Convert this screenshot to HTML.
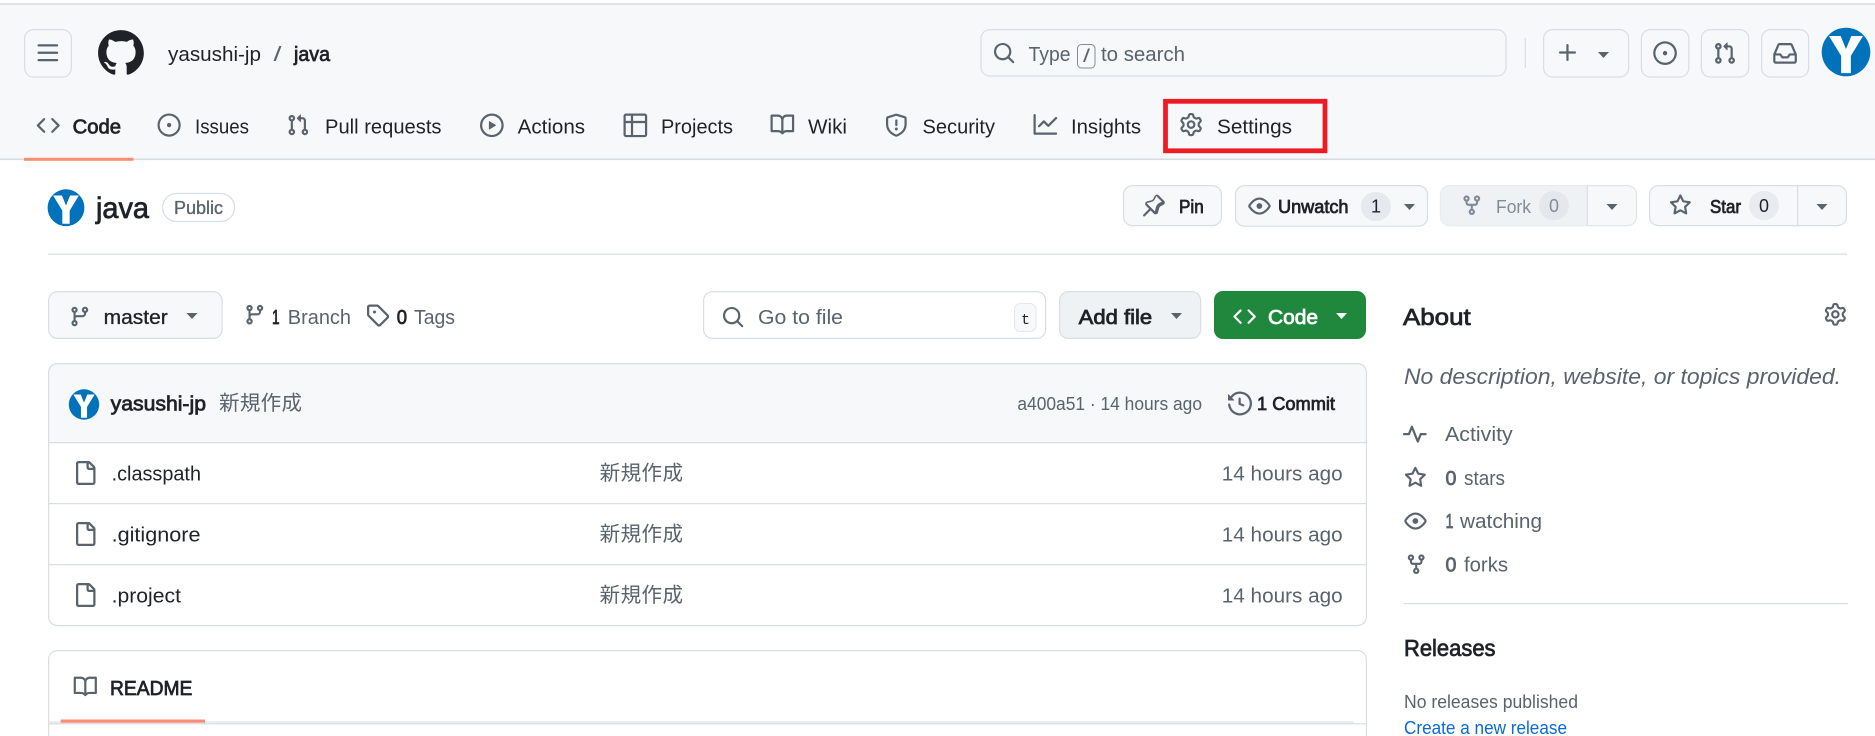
<!DOCTYPE html>
<html lang="ja"><head><meta charset="utf-8"><title>yasushi-jp/java</title>
<style>
html,body{margin:0;padding:0;background:#fff;width:1875px;height:736px;overflow:hidden}
svg{display:block}
text{font-family:"Liberation Sans","Noto Sans CJK JP",sans-serif;font-size:20px;fill:#1f2328}
.m{fill:#59636e}.b{stroke:#1f2328;stroke-width:.75px}.m.b{stroke:#59636e}.s{font-size:18px}
.i{fill:#59636e}
.cjk{font-family:"Liberation Sans","Noto Sans CJK JP",sans-serif;fill:#59636e;font-size:20.5px}
.bx{fill:none;stroke:#d8dee4;stroke-width:1.2}
.g{fill:#f6f8fa;stroke:#d8dee4;stroke-width:1.2}
</style></head><body>
<svg width="1875" height="736" viewBox="0 0 1875 736" xmlns="http://www.w3.org/2000/svg">
<defs>
<path id="bars" d="M1 2.75A.75.75 0 0 1 1.75 2h12.5a.75.75 0 0 1 0 1.5H1.75A.75.75 0 0 1 1 2.75Zm0 5A.75.75 0 0 1 1.75 7h12.5a.75.75 0 0 1 0 1.5H1.75A.75.75 0 0 1 1 7.75ZM1.75 12h12.5a.75.75 0 0 1 0 1.5H1.75a.75.75 0 0 1 0-1.5Z"/>
<path id="gh" d="M12 1C5.923 1 1 5.923 1 12c0 4.867 3.149 8.979 7.521 10.436.55.096.756-.233.756-.522 0-.262-.013-1.128-.013-2.049-2.764.509-3.479-.674-3.699-1.292-.124-.317-.66-1.293-1.127-1.554-.385-.207-.936-.715-.014-.729.866-.014 1.485.797 1.691 1.128.99 1.663 2.571 1.196 3.204.907.096-.715.385-1.196.701-1.471-2.448-.275-5.005-1.224-5.005-5.432 0-1.196.426-2.186 1.128-2.956-.111-.275-.496-1.402.11-2.915 0 0 .921-.288 3.024 1.128a10.193 10.193 0 0 1 2.75-.371c.936 0 1.871.123 2.75.371 2.104-1.43 3.025-1.128 3.025-1.128.605 1.513.221 2.64.111 2.915.701.77 1.127 1.747 1.127 2.956 0 4.222-2.571 5.157-5.019 5.432.399.344.743 1.004.743 2.035 0 1.471-.014 2.654-.014 3.025 0 .289.206.632.756.522C19.851 20.979 23 16.854 23 12c0-6.077-4.922-11-11-11Z"/>
<path id="code" d="m11.28 3.22 4.25 4.25a.75.75 0 0 1 0 1.06l-4.25 4.25a.749.749 0 0 1-1.275-.326.749.749 0 0 1 .215-.734L13.94 8l-3.72-3.72a.749.749 0 0 1 .326-1.275.749.749 0 0 1 .734.215Zm-6.56 0a.751.751 0 0 1 1.042.018.751.751 0 0 1 .018 1.042L2.06 8l3.72 3.72a.749.749 0 0 1-.326 1.275.749.749 0 0 1-.734-.215L.47 8.53a.75.75 0 0 1 0-1.06Z"/>
<path id="issue" d="M8 9.5a1.5 1.5 0 1 0 0-3 1.5 1.5 0 0 0 0 3ZM8 0a8 8 0 1 1 0 16A8 8 0 0 1 8 0ZM1.5 8a6.5 6.5 0 1 0 13 0 6.5 6.5 0 0 0-13 0Z"/>
<path id="pr" d="M1.5 3.25a2.25 2.25 0 1 1 3 2.122v5.256a2.251 2.251 0 1 1-1.5 0V5.372A2.25 2.25 0 0 1 1.5 3.25Zm5.677-.177L9.573.677A.25.25 0 0 1 10 .854V2.5h1A2.5 2.5 0 0 1 13.5 5v5.628a2.251 2.251 0 1 1-1.5 0V5a1 1 0 0 0-1-1h-1v1.646a.25.25 0 0 1-.427.177L7.177 3.427a.25.25 0 0 1 0-.354ZM3.75 2.5a.75.75 0 1 0 0 1.5.75.75 0 0 0 0-1.5Zm0 9.5a.75.75 0 1 0 0 1.5.75.75 0 0 0 0-1.5Zm8.25.75a.75.75 0 1 0 1.5 0 .75.75 0 0 0-1.5 0Z"/>
<path id="play" d="M8 0a8 8 0 1 1 0 16A8 8 0 0 1 8 0ZM1.5 8a6.5 6.5 0 1 0 13 0 6.5 6.5 0 0 0-13 0Zm4.879-2.773 4.264 2.559a.25.25 0 0 1 0 .428l-4.264 2.559A.25.25 0 0 1 6 10.559V5.442a.25.25 0 0 1 .379-.215Z"/>
<path id="table" d="M0 1.75C0 .784.784 0 1.75 0h12.5C15.216 0 16 .784 16 1.75v12.5A1.75 1.75 0 0 1 14.25 16H1.75A1.75 1.75 0 0 1 0 14.25ZM6.5 6.5v8h7.75a.25.25 0 0 0 .25-.25V6.5Zm8-1.5V1.75a.25.25 0 0 0-.25-.25H6.5V5Zm-13 1.5v7.75c0 .138.112.25.25.25H5v-8ZM5 5V1.5H1.75a.25.25 0 0 0-.25.25V5Z"/>
<path id="book" d="M0 1.75A.75.75 0 0 1 .75 1h4.253c1.227 0 2.317.59 3 1.501A3.743 3.743 0 0 1 11.006 1h4.245a.75.75 0 0 1 .75.75v10.5a.75.75 0 0 1-.75.75h-4.507a2.25 2.25 0 0 0-1.591.659l-.622.621a.75.75 0 0 1-1.06 0l-.622-.621A2.25 2.25 0 0 0 5.258 13H.75a.75.75 0 0 1-.75-.75Zm7.251 10.324.004-5.073-.002-2.253A2.25 2.25 0 0 0 5.003 2.5H1.5v9h3.757a3.75 3.75 0 0 1 1.994.574ZM8.755 4.75l-.004 7.322a3.752 3.752 0 0 1 1.992-.572H14.5v-9h-3.495a2.25 2.25 0 0 0-2.25 2.25Z"/>
<path id="shield" d="M7.467.133a1.748 1.748 0 0 1 1.066 0l5.25 1.68A1.75 1.75 0 0 1 15 3.48V7c0 1.566-.32 3.182-1.303 4.682-.983 1.498-2.585 2.813-5.032 3.855a1.697 1.697 0 0 1-1.33 0c-2.447-1.042-4.049-2.357-5.032-3.855C1.32 10.182 1 8.566 1 7V3.48a1.75 1.75 0 0 1 1.217-1.667Zm.61 1.429a.25.25 0 0 0-.153 0l-5.25 1.68a.25.25 0 0 0-.174.238V7c0 1.358.275 2.666 1.057 3.86.784 1.194 2.121 2.34 4.366 3.297a.196.196 0 0 0 .154 0c2.245-.956 3.582-2.104 4.366-3.298C13.225 9.666 13.5 8.36 13.5 7V3.48a.251.251 0 0 0-.174-.237l-5.25-1.68ZM8.75 4.75v3a.75.75 0 0 1-1.5 0v-3a.75.75 0 0 1 1.5 0ZM9 10.5a1 1 0 1 1-2 0 1 1 0 0 1 2 0Z"/>
<path id="graph" d="M1.5 1.75V13.5h13.75a.75.75 0 0 1 0 1.5H.75a.75.75 0 0 1-.75-.75V1.75a.75.75 0 0 1 1.5 0Zm14.28 2.53-5.25 5.25a.75.75 0 0 1-1.06 0L7 7.06 4.28 9.78a.751.751 0 0 1-1.042-.018.751.751 0 0 1-.018-1.042l3.25-3.25a.75.75 0 0 1 1.06 0L10 7.94l4.72-4.72a.751.751 0 0 1 1.042.018.751.751 0 0 1 .018 1.042Z"/>
<path id="gear" fill-rule="evenodd" d="M8 0a8.2 8.2 0 0 1 .701.031C9.444.095 9.99.645 10.16 1.29l.288 1.107c.018.066.079.158.212.224.231.114.454.243.668.386.123.082.233.09.299.071l1.103-.303c.644-.176 1.392.021 1.82.63.27.385.506.792.704 1.218.315.675.111 1.422-.364 1.891l-.814.806c-.049.048-.098.147-.088.294.016.257.016.515 0 .772-.01.147.038.246.088.294l.814.806c.475.469.679 1.216.364 1.891a7.977 7.977 0 0 1-.704 1.217c-.428.61-1.176.807-1.82.63l-1.102-.302c-.067-.019-.177-.011-.3.071a5.909 5.909 0 0 1-.668.386c-.133.066-.194.158-.211.224l-.29 1.106c-.168.646-.715 1.196-1.458 1.26a8.006 8.006 0 0 1-1.402 0c-.743-.064-1.289-.614-1.458-1.26l-.289-1.106c-.018-.066-.079-.158-.212-.224a5.738 5.738 0 0 1-.668-.386c-.123-.082-.233-.09-.299-.071l-1.103.303c-.644.176-1.392-.021-1.82-.63a8.12 8.12 0 0 1-.704-1.218c-.315-.675-.111-1.422.363-1.891l.815-.806c.05-.048.098-.147.088-.294a6.214 6.214 0 0 1 0-.772c.01-.147-.038-.246-.088-.294l-.815-.806C.635 6.045.431 5.298.746 4.623a7.92 7.92 0 0 1 .704-1.217c.428-.61 1.176-.807 1.82-.63l1.102.302c.067.019.177.011.3-.071.214-.143.437-.272.668-.386.133-.066.194-.158.211-.224l.29-1.106C6.009.645 6.556.095 7.299.03 7.53.01 7.764 0 8 0Zm-.571 1.525c-.036.003-.108.036-.137.146l-.289 1.105c-.147.561-.549.967-.998 1.189-.173.086-.34.183-.5.29-.417.278-.97.423-1.529.27l-1.103-.303c-.109-.03-.175.016-.195.045-.22.312-.412.644-.573.99-.014.031-.021.11.059.19l.815.806c.411.406.562.957.53 1.456a4.709 4.709 0 0 0 0 .582c.032.499-.119 1.05-.53 1.456l-.815.806c-.081.08-.073.159-.059.19.162.346.353.677.573.989.02.03.085.076.195.046l1.102-.303c.56-.153 1.113-.008 1.53.27.161.107.328.204.501.29.447.222.85.629.997 1.189l.289 1.105c.029.109.101.143.137.146a6.6 6.6 0 0 0 1.142 0c.036-.003.108-.036.137-.146l.289-1.105c.147-.561.549-.967.998-1.189.173-.086.34-.183.5-.29.417-.278.97-.423 1.529-.27l1.103.303c.109.029.175-.016.195-.045.22-.313.411-.644.573-.99.014-.031.021-.11-.059-.19l-.815-.806c-.411-.406-.562-.957-.53-1.456a4.709 4.709 0 0 0 0-.582c-.032-.499.119-1.05.53-1.456l.815-.806c.081-.08.073-.159.059-.19a6.464 6.464 0 0 0-.573-.989c-.02-.03-.085-.076-.195-.046l-1.102.303c-.56.153-1.113.008-1.53-.27a4.44 4.44 0 0 0-.501-.29c-.447-.222-.85-.629-.997-1.189l-.289-1.105c-.029-.11-.101-.143-.137-.146a6.6 6.6 0 0 0-1.142 0ZM11 8a3 3 0 1 1-6 0 3 3 0 0 1 6 0ZM9.5 8a1.5 1.5 0 1 0-3.001.001A1.5 1.5 0 0 0 9.5 8Z"/>
<path id="search" d="M10.68 11.74a6 6 0 0 1-7.922-8.982 6 6 0 0 1 8.982 7.922l3.04 3.04a.749.749 0 0 1-.326 1.275.749.749 0 0 1-.734-.215ZM11.5 7a4.499 4.499 0 1 0-8.997 0A4.499 4.499 0 0 0 11.5 7Z"/>
<path id="plus" d="M7.75 2a.75.75 0 0 1 .75.75V7h4.25a.75.75 0 0 1 0 1.5H8.5v4.25a.75.75 0 0 1-1.5 0V8.5H2.75a.75.75 0 0 1 0-1.5H7V2.75A.75.75 0 0 1 7.75 2Z"/>
<path id="inbox" d="M2.8 2.06A1.75 1.75 0 0 1 4.41 1h7.18c.7 0 1.333.417 1.61 1.06l2.74 6.395c.04.093.06.194.06.295v4.5A1.75 1.75 0 0 1 14.25 15H1.75A1.75 1.75 0 0 1 0 13.25v-4.5c0-.101.02-.202.06-.295Zm1.61.44a.25.25 0 0 0-.23.152L1.887 8H4.75a.75.75 0 0 1 .6.3L6.625 10h2.75l1.275-1.7a.75.75 0 0 1 .6-.3h2.863L11.82 2.652a.25.25 0 0 0-.23-.152Zm10.09 7h-2.875l-1.275 1.7a.75.75 0 0 1-.6.3h-3.5a.75.75 0 0 1-.6-.3L4.375 9.5H1.5v3.75c0 .138.112.25.25.25h12.5a.25.25 0 0 0 .25-.25Z"/>
<path id="pin" fill-rule="evenodd" d="m11.294.984 3.722 3.722a1.75 1.75 0 0 1-.504 2.826l-1.327.613a3.089 3.089 0 0 0-1.707 2.084l-.584 2.454c-.317 1.332-1.972 1.8-2.94.832L5.75 11.311 1.78 15.28a.749.749 0 0 1-1.275-.326.749.749 0 0 1 .215-.734L4.69 10.25 2.487 8.046c-.968-.968-.5-2.623.832-2.94l2.454-.584a3.08 3.08 0 0 0 2.084-1.707l.613-1.327a1.75 1.75 0 0 1 2.824-.504ZM9.53 1.782 8.917 3.11a4.58 4.58 0 0 1-3.1 2.51l-2.454.584a.25.25 0 0 0-.12.42l5.128 5.128a.25.25 0 0 0 .42-.12l.584-2.454a4.58 4.58 0 0 1 2.51-3.1l1.327-.613a.25.25 0 0 0 .072-.404l-3.722-3.722a.25.25 0 0 0-.403.072Z"/>
<path id="eye" d="M8 2c1.981 0 3.671.992 4.933 2.078 1.27 1.091 2.187 2.345 2.637 3.023a1.62 1.62 0 0 1 0 1.798c-.45.678-1.367 1.932-2.637 3.023C11.67 13.008 9.981 14 8 14c-1.981 0-3.671-.992-4.933-2.078C1.797 10.83.88 9.576.43 8.898a1.62 1.62 0 0 1 0-1.798c.45-.677 1.367-1.931 2.637-3.022C4.33 2.992 6.019 2 8 2ZM1.679 7.932a.12.12 0 0 0 0 .136c.411.622 1.241 1.75 2.366 2.717C5.176 11.758 6.527 12.5 8 12.5c1.473 0 2.825-.742 3.955-1.715 1.124-.967 1.954-2.096 2.366-2.717a.12.12 0 0 0 0-.136c-.412-.621-1.242-1.75-2.366-2.717C10.824 4.242 9.473 3.5 8 3.5c-1.473 0-2.825.742-3.955 1.715-1.124.967-1.954 2.096-2.366 2.717ZM8 10a2 2 0 1 1-.001-3.999A2 2 0 0 1 8 10Z"/>
<path id="fork" d="M5 5.372v.878c0 .414.336.75.75.75h4.5a.75.75 0 0 0 .75-.75v-.878a2.25 2.25 0 1 1 1.5 0v.878a2.25 2.25 0 0 1-2.25 2.25h-1.5v2.128a2.251 2.251 0 1 1-1.5 0V8.5h-1.5A2.25 2.25 0 0 1 3.5 6.25v-.878a2.25 2.25 0 1 1 1.5 0ZM5 3.25a.75.75 0 1 0-1.5 0 .75.75 0 0 0 1.5 0Zm6.75.75a.75.75 0 1 0 0-1.5.75.75 0 0 0 0 1.5Zm-3 8.75a.75.75 0 1 0-1.5 0 .75.75 0 0 0 1.5 0Z"/>
<path id="star" d="M8 .25a.75.75 0 0 1 .673.418l1.882 3.815 4.21.612a.75.75 0 0 1 .416 1.279l-3.046 2.97.719 4.192a.751.751 0 0 1-1.088.791L8 12.347l-3.766 1.98a.75.75 0 0 1-1.088-.79l.72-4.194L.818 6.374a.75.75 0 0 1 .416-1.28l4.21-.611L7.327.668A.75.75 0 0 1 8 .25Zm0 2.445L6.615 5.5a.75.75 0 0 1-.564.41l-3.097.45 2.24 2.184a.75.75 0 0 1 .216.664l-.528 3.084 2.769-1.456a.75.75 0 0 1 .698 0l2.77 1.456-.53-3.084a.75.75 0 0 1 .216-.664l2.24-2.183-3.096-.45a.75.75 0 0 1-.564-.41L8 2.694Z"/>
<path id="branch" d="M9.5 3.25a2.25 2.25 0 1 1 3 2.122V6A2.5 2.5 0 0 1 10 8.5H6a1 1 0 0 0-1 1v1.128a2.251 2.251 0 1 1-1.5 0V5.372a2.25 2.25 0 1 1 1.5 0v1.836A2.493 2.493 0 0 1 6 7h4a1 1 0 0 0 1-1v-.628A2.25 2.25 0 0 1 9.5 3.25Zm-6 0a.75.75 0 1 0 1.5 0 .75.75 0 0 0-1.5 0Zm8.25-.75a.75.75 0 1 0 0 1.5.75.75 0 0 0 0-1.5ZM4.25 12a.75.75 0 1 0 0 1.5.75.75 0 0 0 0-1.5Z"/>
<path id="tag" d="M1 7.775V2.75C1 1.784 1.784 1 2.75 1h5.025c.464 0 .91.184 1.238.513l6.25 6.25a1.75 1.75 0 0 1 0 2.474l-5.026 5.026a1.75 1.75 0 0 1-2.474 0l-6.25-6.25A1.752 1.752 0 0 1 1 7.775Zm1.5 0c0 .066.026.13.073.177l6.25 6.25a.25.25 0 0 0 .354 0l5.025-5.025a.25.25 0 0 0 0-.354l-6.25-6.25a.25.25 0 0 0-.177-.073H2.75a.25.25 0 0 0-.25.25ZM6 5a1 1 0 1 1 0 2 1 1 0 0 1 0-2Z"/>
<path id="hist" d="m.427 1.927 1.215 1.215a8.002 8.002 0 1 1-1.6 5.685.75.75 0 1 1 1.493-.154 6.5 6.5 0 1 0 1.18-4.458l1.358 1.358A.25.25 0 0 1 3.896 6H.25A.25.25 0 0 1 0 5.75V2.104a.25.25 0 0 1 .427-.177ZM7.75 4a.75.75 0 0 1 .75.75v2.992l2.028.812a.75.75 0 0 1-.557 1.392l-2.5-1A.751.751 0 0 1 7 8.25v-3.5A.75.75 0 0 1 7.75 4Z"/>
<path id="file" d="M2 1.75C2 .784 2.784 0 3.75 0h6.586c.464 0 .909.184 1.237.513l2.914 2.914c.329.328.513.773.513 1.237v9.586A1.75 1.75 0 0 1 13.25 16h-9.5A1.75 1.75 0 0 1 2 14.25Zm1.75-.25a.25.25 0 0 0-.25.25v12.5c0 .138.112.25.25.25h9.5a.25.25 0 0 0 .25-.25V6h-2.75A1.75 1.75 0 0 1 9 4.25V1.5Zm6.75.062V4.25c0 .138.112.25.25.25h2.688l-.011-.013-2.914-2.914-.013-.011Z"/>
<path id="pulse" d="M6 2c.306 0 .582.187.696.471L10 10.731l1.304-3.26A.751.751 0 0 1 12 7h3.25a.75.75 0 0 1 0 1.5h-2.742l-1.812 4.528a.751.751 0 0 1-1.392 0L6 4.77 4.696 8.03A.75.75 0 0 1 4 8.5H.75a.75.75 0 0 1 0-1.5h2.742l1.812-4.529A.751.751 0 0 1 6 2Z"/>
<g id="av"><circle r="1" fill="#0072bc"/><path fill="#fff" d="M-.7-.66H-.22L0-.12.22-.66H.7L.2.16V.87H-.2V.16Z"/></g>
<path id="car" d="M0 0H11L5.5 6Z"/>
</defs>
<rect width="1875" height="736" fill="#fff"/>
<rect y="3" width="1875" height="2" fill="#e2e2e2"/>
<rect y="5" width="1875" height="154" fill="#f6f8fa"/>
<rect y="158.5" width="1875" height="1.6" fill="#d6dbe1"/>
<rect x="24" y="157.8" width="109.5" height="3" fill="#fd8c73"/>

<!-- top bar -->
<rect class="bx" x="24.6" y="29.6" width="46.8" height="47.4" rx="9"/>
<use href="#bars" class="i" transform="translate(36 41.3) scale(1.48)"/>
<use href="#gh" fill="#1f2328" transform="translate(96 28) scale(2.08)"/>
<text x="168" y="61" textLength="93" lengthAdjust="spacingAndGlyphs">yasushi-jp</text>
<text x="273.5" y="61" class="m" textLength="8" lengthAdjust="spacingAndGlyphs">/</text>
<text x="294" y="61" class="b" textLength="36" lengthAdjust="spacingAndGlyphs">java</text>

<rect class="bx" x="981" y="29.6" width="525" height="46.4" rx="9"/>
<use href="#search" class="i" transform="translate(992.5 41.5) scale(1.45)"/>
<text x="1028.5" y="61" class="m" textLength="42" lengthAdjust="spacingAndGlyphs">Type</text>
<rect x="1077.5" y="44.5" width="17.5" height="23.5" rx="4" fill="none" stroke="#818b98" stroke-width="1"/>
<text x="1083" y="62" class="m s" textLength="7" lengthAdjust="spacingAndGlyphs">/</text>
<text x="1101" y="61" class="m" textLength="84" lengthAdjust="spacingAndGlyphs">to search</text>
<rect x="1524.7" y="38" width="1.2" height="30" fill="#d8dee4"/>

<rect class="bx" x="1543.6" y="29.6" width="85" height="47.4" rx="9"/>
<use href="#plus" class="i" transform="translate(1556 41) scale(1.48)"/>
<use href="#car" class="i" transform="translate(1598 52)"/>
<rect class="bx" x="1641.4" y="29.6" width="47.4" height="47.4" rx="9"/>
<use href="#issue" class="i" transform="translate(1653.2 41.3) scale(1.48)"/>
<rect class="bx" x="1701.4" y="29.6" width="47.4" height="47.4" rx="9"/>
<use href="#pr" class="i" transform="translate(1712.8 41.5) scale(1.48)"/>
<rect class="bx" x="1761.6" y="29.6" width="47" height="47.4" rx="9"/>
<use href="#inbox" class="i" transform="translate(1773.2 41.5) scale(1.48)"/>
<use href="#av" transform="translate(1846 52) scale(24.3)"/>

<!-- nav -->
<use href="#code" class="i" transform="translate(36.4 113.6) scale(1.48)"/>
<text x="72.6" y="133.3" class="b" textLength="48.5" lengthAdjust="spacingAndGlyphs">Code</text>
<use href="#issue" class="i" transform="translate(157.5 113.5) scale(1.45)"/>
<text x="195" y="133.3" textLength="54" lengthAdjust="spacingAndGlyphs">Issues</text>
<use href="#pr" class="i" transform="translate(286.4 113.5) scale(1.45)"/>
<text x="325" y="133.3" textLength="116.5" lengthAdjust="spacingAndGlyphs">Pull requests</text>
<use href="#play" class="i" transform="translate(480 113.5) scale(1.48)"/>
<text x="517.6" y="133.3" textLength="67.5" lengthAdjust="spacingAndGlyphs">Actions</text>
<use href="#table" class="i" transform="translate(623.5 113.5) scale(1.48)"/>
<text x="661" y="133.3" textLength="72" lengthAdjust="spacingAndGlyphs">Projects</text>
<use href="#book" class="i" transform="translate(770.5 113) scale(1.48)"/>
<text x="808" y="133.3" textLength="39" lengthAdjust="spacingAndGlyphs">Wiki</text>
<use href="#shield" class="i" transform="translate(884.5 113.5) scale(1.48)"/>
<text x="922.5" y="133.3" textLength="72.5" lengthAdjust="spacingAndGlyphs">Security</text>
<use href="#graph" class="i" transform="translate(1033.5 112.5) scale(1.48)"/>
<text x="1071" y="133.3" textLength="70" lengthAdjust="spacingAndGlyphs">Insights</text>
<use href="#gear" class="i" transform="translate(1179.5 113) scale(1.45)"/>
<text x="1217" y="133.3" textLength="75" lengthAdjust="spacingAndGlyphs">Settings</text>
<rect x="1165.5" y="101.3" width="159.5" height="49.5" fill="none" stroke="#ed1c24" stroke-width="4.8"/>

<!-- repo head -->
<use href="#av" transform="translate(66 207.7) scale(18.4)"/>
<text x="96" y="218" class="b" style="font-size:30px" textLength="53" lengthAdjust="spacingAndGlyphs">java</text>
<rect x="162.6" y="193.5" width="72" height="28" rx="14" fill="#fff" stroke="#d8dee4" stroke-width="1.2"/>
<text x="174" y="213.8" class="m s b" textLength="49" lengthAdjust="spacingAndGlyphs" style="stroke-width:.35px">Public</text>

<rect class="g" x="1123.5" y="185.6" width="98" height="40" rx="9"/>
<use href="#pin" class="i" transform="translate(1142.3 194) scale(1.45)"/>
<text x="1179" y="213" class="s b" textLength="24.7" lengthAdjust="spacingAndGlyphs">Pin</text>

<rect class="g" x="1235.5" y="185.6" width="192" height="40.6" rx="9"/>
<use href="#eye" class="i" transform="translate(1248 194.6) scale(1.43)"/>
<text x="1278" y="213" class="s b" textLength="70.5" lengthAdjust="spacingAndGlyphs">Unwatch</text>
<rect x="1360.8" y="192" width="30.2" height="29" rx="14.5" fill="#e6eaef"/>
<text x="1371" y="212.5" class="s" textLength="10" lengthAdjust="spacingAndGlyphs">1</text>
<use href="#car" class="i" transform="translate(1404 204)"/>

<rect x="1440.5" y="185.6" width="196" height="40" rx="9" fill="#f6f8fa" stroke="#e1e5ea" stroke-width="1.2"/>
<path d="M1587 185.6H1449.5a9 9 0 0 0-9 9v22a9 9 0 0 0 9 9H1587Z" fill="#eff2f5"/>
<rect x="1586.7" y="185.6" width="1.2" height="40" fill="#d8dee4"/>
<use href="#fork" fill="#818b98" transform="translate(1460.6 194) scale(1.4)"/>
<text x="1496" y="213" class="s" style="fill:#818b98" textLength="35" lengthAdjust="spacingAndGlyphs">Fork</text>
<rect x="1539" y="191" width="30" height="29" rx="14.5" fill="#e4e8ec"/>
<text x="1549" y="212" class="s" style="fill:#818b98" textLength="10" lengthAdjust="spacingAndGlyphs">0</text>
<use href="#car" class="i" transform="translate(1606.5 204)"/>

<rect class="g" x="1649.5" y="185.6" width="197" height="40" rx="9"/>
<rect x="1797" y="185.6" width="1.2" height="40" fill="#d8dee4"/>
<use href="#star" class="i" transform="translate(1669 194) scale(1.42)"/>
<text x="1710" y="213" class="s b" textLength="31" lengthAdjust="spacingAndGlyphs">Star</text>
<rect x="1749" y="191" width="30" height="29" rx="14.5" fill="#e8ebef"/>
<text x="1759" y="212" class="s" textLength="10" lengthAdjust="spacingAndGlyphs">0</text>
<use href="#car" class="i" transform="translate(1816.5 204)"/>
<rect x="48" y="253.6" width="1799" height="1.2" fill="#d8dee4"/>

<!-- toolbar -->
<rect class="g" x="48.6" y="291.6" width="173.5" height="46.8" rx="9"/>
<use href="#branch" class="i" transform="translate(68.6 305.3) scale(1.4)"/>
<text x="103.7" y="324" class="b" style="stroke-width:.35px" textLength="64" lengthAdjust="spacingAndGlyphs">master</text>
<use href="#car" class="i" transform="translate(186.5 313)"/>
<use href="#branch" class="i" transform="translate(243.6 303.5) scale(1.4)"/>
<text x="272" y="324" class="b" textLength="7.6" lengthAdjust="spacingAndGlyphs">1</text>
<text x="287.8" y="324" class="m" textLength="63.2" lengthAdjust="spacingAndGlyphs">Branch</text>
<use href="#tag" class="i" transform="translate(365.5 303) scale(1.5)"/>
<text x="396.7" y="324" class="b" textLength="10.3" lengthAdjust="spacingAndGlyphs">0</text>
<text x="414" y="324" class="m" textLength="41" lengthAdjust="spacingAndGlyphs">Tags</text>

<rect x="703.6" y="291.6" width="342" height="46.8" rx="9" fill="#fff" stroke="#d8dee4" stroke-width="1.2"/>
<use href="#search" class="i" transform="translate(721.5 305.5) scale(1.45)"/>
<text x="758" y="324" class="m" textLength="85" lengthAdjust="spacingAndGlyphs">Go to file</text>
<rect x="1014.5" y="303.5" width="21.5" height="28" rx="6" fill="#f6f8fa" stroke="#e5e9ed" stroke-width="1"/>
<text x="1021" y="324" style="font-family:'Liberation Mono',monospace;font-size:15px;fill:#1f2328">t</text>

<rect x="1059.6" y="291.6" width="141" height="46.8" rx="9" fill="#eff2f5" stroke="#d8dee4" stroke-width="1.2"/>
<text x="1078.7" y="324" class="b" textLength="73.5" lengthAdjust="spacingAndGlyphs">Add file</text>
<use href="#car" class="i" transform="translate(1171 313)"/>

<rect x="1214" y="291" width="152" height="48" rx="9" fill="#1f883d"/>
<use href="#code" fill="#fff" transform="translate(1233 305) scale(1.45)"/>
<text x="1268" y="324" class="b" style="fill:#fff;stroke:#fff" textLength="50" lengthAdjust="spacingAndGlyphs">Code</text>
<use href="#car" fill="#fff" transform="translate(1336 313)"/>

<!-- commit card -->
<rect x="48.6" y="363.6" width="1317.8" height="262" rx="9" fill="#fff" stroke="#d8dee4" stroke-width="1.2"/>
<path d="M48.6 442.6V372.6a9 9 0 0 1 9-9H1357.4a9 9 0 0 1 9 9V442.6Z" fill="#f6f8fa" stroke="#d8dee4" stroke-width="1.2"/>
<use href="#av" transform="translate(84 404.5) scale(15.2)"/>
<text x="110.6" y="410.7" class="b" textLength="95.4" lengthAdjust="spacingAndGlyphs">yasushi-jp</text>
<text x="219" y="410" class="cjk" textLength="83">新規作成</text>
<text x="1017.4" y="410" class="m s" textLength="184.6" lengthAdjust="spacingAndGlyphs">a400a51 · 14 hours ago</text>
<use href="#hist" class="i" transform="translate(1228 391.5) scale(1.5)"/>
<text x="1257" y="410" class="s b" textLength="78" lengthAdjust="spacingAndGlyphs">1 Commit</text>

<rect x="48.6" y="503" width="1317.8" height="1.2" fill="#d8dee4"/>
<rect x="48.6" y="564" width="1317.8" height="1.2" fill="#d8dee4"/>

<use href="#file" class="i" transform="translate(73 461) scale(1.5)"/>
<text x="111.6" y="480.7" textLength="89.4" lengthAdjust="spacingAndGlyphs">.classpath</text>
<text x="599.6" y="480" class="cjk" textLength="83.4">新規作成</text>
<text x="1221.8" y="480.7" class="m" textLength="120.8" lengthAdjust="spacingAndGlyphs">14 hours ago</text>

<use href="#file" class="i" transform="translate(73 522) scale(1.5)"/>
<text x="111.6" y="541.7" textLength="88.9" lengthAdjust="spacingAndGlyphs">.gitignore</text>
<text x="599.6" y="541" class="cjk" textLength="83.4">新規作成</text>
<text x="1221.8" y="541.7" class="m" textLength="120.8" lengthAdjust="spacingAndGlyphs">14 hours ago</text>

<use href="#file" class="i" transform="translate(73 583) scale(1.5)"/>
<text x="111.6" y="602.7" textLength="69.4" lengthAdjust="spacingAndGlyphs">.project</text>
<text x="599.6" y="602" class="cjk" textLength="83.4">新規作成</text>
<text x="1221.8" y="602.7" class="m" textLength="120.8" lengthAdjust="spacingAndGlyphs">14 hours ago</text>

<!-- readme -->
<path d="M48.6 737V659.6a9 9 0 0 1 9-9H1357.4a9 9 0 0 1 9 9V737" fill="#fff" stroke="#d8dee4" stroke-width="1.2"/>
<rect x="48.6" y="721.2" width="1305" height="2.6" fill="#e8ebef"/>
<rect x="48.6" y="723.2" width="1317.8" height="1.2" fill="#d8dee4"/>
<rect x="60.7" y="719.5" width="144.3" height="3.2" fill="#fd8c73"/>
<use href="#book" class="i" transform="translate(73.7 675.2) scale(1.45)"/>
<text x="110" y="695" class="b" textLength="82.4" lengthAdjust="spacingAndGlyphs">README</text>

<!-- sidebar -->
<text x="1403" y="325" class="b" style="font-size:23px" textLength="67.7" lengthAdjust="spacingAndGlyphs">About</text>
<use href="#gear" class="i" transform="translate(1824 303) scale(1.42)"/>
<text x="1404" y="384" class="m" style="font-size:22px;font-style:italic" textLength="437" lengthAdjust="spacingAndGlyphs">No description, website, or topics provided.</text>
<use href="#pulse" class="i" transform="translate(1403 422.7) scale(1.48)"/>
<text x="1445" y="441" class="m" textLength="67.7" lengthAdjust="spacingAndGlyphs">Activity</text>
<use href="#star" class="i" transform="translate(1404 466.4) scale(1.42)"/>
<text x="1445.5" y="485" class="m b" textLength="10.9" lengthAdjust="spacingAndGlyphs">0</text>
<text x="1464" y="485" class="m" textLength="41" lengthAdjust="spacingAndGlyphs">stars</text>
<use href="#eye" class="i" transform="translate(1404 509.6) scale(1.43)"/>
<text x="1445.5" y="528" class="m b" textLength="8" lengthAdjust="spacingAndGlyphs">1</text>
<text x="1460" y="528" class="m" textLength="82" lengthAdjust="spacingAndGlyphs">watching</text>
<use href="#fork" class="i" transform="translate(1405 553) scale(1.4)"/>
<text x="1445.5" y="571.7" class="m b" textLength="10.9" lengthAdjust="spacingAndGlyphs">0</text>
<text x="1464" y="571.7" class="m" textLength="44" lengthAdjust="spacingAndGlyphs">forks</text>
<rect x="1403.5" y="603" width="444.5" height="1.2" fill="#d8dee4"/>
<text x="1404" y="656" class="b" style="font-size:23px" textLength="91.5" lengthAdjust="spacingAndGlyphs">Releases</text>
<text x="1404" y="708" class="m s" textLength="174" lengthAdjust="spacingAndGlyphs">No releases published</text>
<text x="1404" y="734" class="s" style="fill:#0969da" textLength="163" lengthAdjust="spacingAndGlyphs">Create a new release</text>
</svg>
</body></html>
